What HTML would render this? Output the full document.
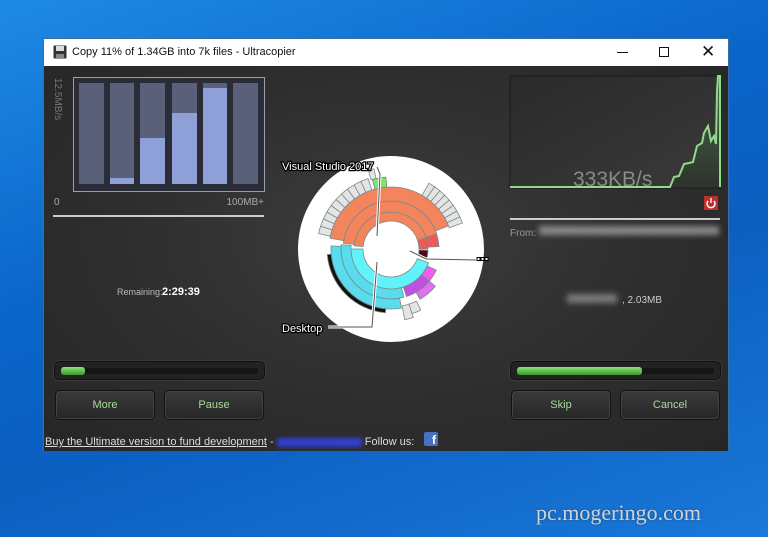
<!DOCTYPE html>
<html><head><meta charset="utf-8"><style>
*{margin:0;padding:0;box-sizing:border-box}
body{width:768px;height:537px;overflow:hidden;position:relative;font-family:"Liberation Sans",sans-serif;
background:linear-gradient(160deg,#1e8ae6 0%,#0a64c8 40%,#0b5fc0 60%,#1a78d8 100%)}
.abs{position:absolute}
#win{left:43px;top:38px;width:686px;height:413px;background:#2c2c2c;border:1px solid #3a6ea8}
#title{left:0;top:0;width:684px;height:27px;background:#fff;color:#111;font-size:11px}
#body{left:0;top:27px;width:684px;height:385px;background:radial-gradient(ellipse at 50% 45%,#3d3d3d 0%,#2e2e2e 55%,#262626 100%)}
.btn{position:absolute;height:30px;width:100px;border-radius:5px;background:linear-gradient(#3a3a3a,#262626);border:1px solid #111;box-shadow:0 0 0 1px #444 inset;color:#a9d99a;font-size:11px;text-align:center;line-height:28px}
.pb{position:absolute;height:19px;width:211px;border-radius:5px;background:#222;border:1px solid #111;box-shadow:0 0 2px #555}
.pb i{position:absolute;left:6px;top:6px;height:6px;right:6px;background:#151515;border-radius:2px}
.pb b{position:absolute;left:6px;top:5px;height:8px;border-radius:3px;background:linear-gradient(#8fe07a,#3b9a2a)}
.blur{filter:blur(3px);background:#8a8a8a;position:absolute}
</style></head><body>
<div id="win" class="abs">
 <div id="title" class="abs">
  <svg class="abs" style="left:9px;top:6px" width="14" height="14"><rect x="0.5" y="0.5" width="13" height="13" fill="#333" rx="1"/><rect x="3" y="1" width="8" height="5" fill="#ddd"/><rect x="3" y="9" width="8" height="4" fill="#888"/></svg>
  <div class="abs" style="left:28px;top:7px">Copy 11% of 1.34GB into 7k files - Ultracopier</div>
  <div class="abs" style="left:573px;top:13px;width:11px;height:1px;background:#111"></div>
  <div class="abs" style="left:615px;top:8px;width:10px;height:10px;border:1px solid #111"></div>
  <div class="abs" style="left:657px;top:3px;font-size:17px;color:#111">✕</div>
 </div>
 <div id="body" class="abs">
  <svg class="abs" style="left:0;top:0" width="684" height="385" id="svg">
   <rect x="29.5" y="11.5" width="191" height="114" fill="#2a2d38" stroke="#9a9fb0"/>
   <g fill="#5a6078"><rect x="35" y="17" width="25" height="101"/><rect x="66" y="17" width="24" height="101"/><rect x="96" y="17" width="25" height="101"/><rect x="128" y="17" width="25" height="101"/><rect x="159" y="17" width="24" height="101"/><rect x="189" y="17" width="25" height="101"/></g>
   <g fill="#8fa0d8"><rect x="66" y="112" width="24" height="6"/><rect x="96" y="72" width="25" height="46"/><rect x="128" y="47" width="25" height="71"/><rect x="159" y="22" width="24" height="96"/></g>
   <text x="0" y="0" transform="translate(11,12) rotate(90)" fill="#777" font-size="10">12.5MB/s</text>
   <text x="10" y="139" fill="#aaa" font-size="10">0</text>
   <text x="220" y="139" fill="#aaa" font-size="10" text-anchor="end">100MB+</text>
   <rect x="9" y="149" width="211" height="2" fill="#ccc"/>
   <defs><linearGradient id="gg" x1="0" y1="0" x2="0" y2="1"><stop offset="0" stop-color="#4a6a4a"/><stop offset="1" stop-color="#2d332d"/></linearGradient>
   <linearGradient id="rg" x1="0" y1="0" x2="1" y2="1"><stop offset="0" stop-color="#2a2a2a"/><stop offset="1" stop-color="#3a3a3a"/></linearGradient></defs>
   <rect x="466" y="10" width="210" height="112" fill="url(#rg)" stroke="#1a1a1a"/>
   <path d="M466 121 L626 121 L630 111 L635 110 L640 98 L645 97 L649 96 L653 80 L658 77 L660 67 L664 60 L667 75 L670 70 L672 78 L673 25 L674 10 L676 10 L676 121 Z" fill="url(#gg)"/>
   <path d="M466 121 L626 121 L630 111 L635 110 L640 98 L645 97 L649 96 L653 80 L658 77 L660 67 L664 60 L667 75 L670 70 L672 78 L673 25 L674 10 L676 10 L676 121" fill="none" stroke="#8fdc86" stroke-width="2"/>
   <text x="529" y="120" fill="#8a8a8a" font-size="21">333KB/s</text>
   <rect x="660" y="130" width="14" height="14" fill="#c0302a"/>
   <path d="M664 135 A4 4 0 1 0 670 135" stroke="#fff" fill="none" stroke-width="1.5"/><rect x="666.3" y="132" width="1.4" height="5" fill="#fff"/>
   <rect x="466" y="152" width="210" height="2" fill="#ccc"/>
   <text x="466" y="170" fill="#999" font-size="10">From:</text>
   <text x="73" y="229" fill="#bbb" font-size="9">Remaining:</text>
   <text x="118" y="229" fill="#fff" font-size="11" font-weight="bold">2:29:39</text>
   <text x="578" y="237" fill="#ccc" font-size="10">, 2.03MB</text>
   <circle cx="347" cy="183" r="93" fill="#fff"/>
   <g id="sb" stroke="#7a8a8a" stroke-width="0.8"></g>
   <g stroke="#fff" stroke-width="3" fill="none"><path d="M333 101 L336 108 L333 170"/><path d="M284 261 L328 261 L333 196"/><path d="M366 185 L382 193 L432 194"/></g>
   <g stroke="#555" stroke-width="1" fill="none"><path d="M333 101 L336 108 L333 170"/><path d="M284 261 L328 261 L333 196"/><path d="M366 185 L382 193 L432 194"/></g>
   <text x="238" y="104" fill="#fff" font-size="11" stroke="#000" stroke-width="2.5" paint-order="stroke">Visual Studio 2017</text>
   <text x="238" y="266" fill="#fff" font-size="11" stroke="#000" stroke-width="2.5" paint-order="stroke">Desktop</text>
   <g fill="#fff" stroke="#000"><rect x="433" y="191.5" width="3" height="3"/><rect x="437" y="191.5" width="3" height="3"/><rect x="441" y="191.5" width="3" height="3"/></g>
  </svg>
  <div class="blur" style="left:495px;top:160px;width:180px;height:9px;background:#888"></div>
  <div class="blur" style="left:523px;top:228px;width:50px;height:9px;background:#7a7a7a"></div>
  <div class="pb" style="left:10px;top:295px"><i></i><b style="width:24px"></b></div>
  <div class="pb" style="left:466px;top:295px"><i></i><b style="width:125px"></b></div>
  <div class="btn" style="left:11px;top:324px">More</div>
  <div class="btn" style="left:120px;top:324px">Pause</div>
  <div class="btn" style="left:467px;top:324px">Skip</div>
  <div class="btn" style="left:576px;top:324px">Cancel</div>
  <div class="abs" style="left:1px;top:370px;font-size:11px;color:#ddd;white-space:nowrap"><span style="text-decoration:underline">Buy the Ultimate version to fund development</span> - <span style="display:inline-block;width:85px;height:9px;background:#3040d0;filter:blur(2px);vertical-align:middle"></span> Follow us:</div>
  <div class="abs" style="left:380px;top:366px;width:14px;height:14px;background:#4a70c0;border-radius:2px;color:#fff;font-weight:bold;font-size:12px;text-align:right;padding-right:2px;line-height:16px">f</div>
 </div>
</div>
<div class="abs" style="left:536px;top:500px;font-family:'Liberation Serif',serif;font-size:22px;color:rgba(255,255,255,0.75);text-shadow:0 0 2px #345">pc.mogeringo.com</div>
<script>
const g=document.getElementById('sb'),cx=347,cy=183;
function P(a){return a*Math.PI/180}
function arc(r0,r1,a0,a1,f){const p=(r,a)=>[cx+r*Math.cos(P(a)),cy+r*Math.sin(P(a))];
const l=(a1-a0)>180?1:0;const A=p(r1,a0),B=p(r1,a1),C=p(r0,a1),D=p(r0,a0);
const e=document.createElementNS('http://www.w3.org/2000/svg','path');
e.setAttribute('d',`M${A} A${r1} ${r1} 0 ${l} 1 ${B} L${C} A${r0} ${r0} 0 ${l} 0 ${D}Z`);e.setAttribute('fill',f);g.appendChild(e);}
arc(28,37,185,342,'#f4845c');arc(37,48,187,342,'#f4845c');arc(48,62,190,338,'#f4845c');
arc(28,37,342,360,'#ee5a5a');arc(37,48,342,357,'#ee5a5a');arc(28,37,2,14,'#4a0a18');
arc(28,40,20,180,'#62f2fa');arc(40,50,75,185,'#58dcee');arc(50,60,80,183,'#58dcee');arc(60,64,95,175,'#111');
arc(40,50,38,72,'#c050e0');arc(40,50,25,40,'#f060f0');arc(50,58,40,60,'#e070f0');
for(let a=192;a<250;a+=6)arc(62,74,a,a+6,'#e4e4e4');
for(let a=300;a<338;a+=5)arc(62,76,a,a+5,'#e4e4e4');
arc(62,72,255,266,'#7ae860');arc(72,82,254,258,'#e4e4e4');
arc(58,68,64,72,'#e4e4e4');arc(58,72,72,79,'#e4e4e4');
</script>
</body></html>
